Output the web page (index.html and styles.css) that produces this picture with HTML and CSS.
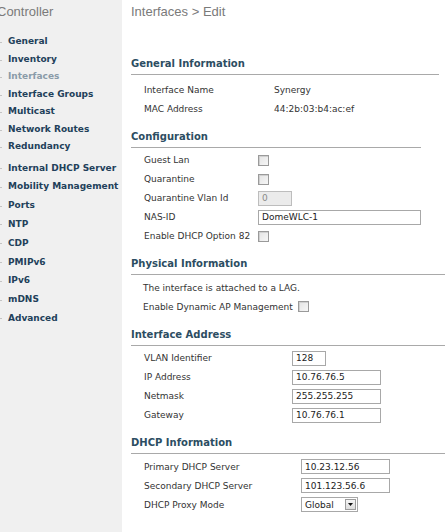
FILE: index.html
```html
<!DOCTYPE html>
<html>
<head>
<meta charset="utf-8">
<title>Interfaces &gt; Edit</title>
<link rel="stylesheet" href="styles.css">
</head>
<body>
<div class="layout">
  <aside class="sidebar">
    <div class="side-title">Controller</div>
    <ul class="nav nav-a">
      <li>General</li>
      <li>Inventory</li>
      <li class="active">Interfaces</li>
      <li>Interface Groups</li>
      <li>Multicast</li>
      <li>Network Routes</li>
      <li>Redundancy</li>
    </ul>
    <ul class="nav nav-b">
      <li>Internal DHCP Server</li>
      <li>Mobility Management</li>
      <li>Ports</li>
      <li>NTP</li>
      <li>CDP</li>
      <li>PMIPv6</li>
      <li>IPv6</li>
      <li>mDNS</li>
      <li>Advanced</li>
    </ul>
  </aside>
  <main class="main">
    <div class="page-title">Interfaces &gt; Edit</div>

    <section class="section first">
      <h2 class="sec-head w-general">General Information</h2>
      <div class="rows rows-general">
        <div class="lab">Interface Name</div><div class="val">Synergy</div>
        <div class="lab">MAC Address</div><div class="val">44:2b:03:b4:ac:ef</div>
      </div>
    </section>

    <section class="section">
      <h2 class="sec-head w-config">Configuration</h2>
      <div class="rows rows-config">
        <div class="lab">Guest Lan</div><div class="val"><input type="checkbox" class="chk"></div>
        <div class="lab">Quarantine</div><div class="val"><input type="checkbox" class="chk"></div>
        <div class="lab">Quarantine Vlan Id</div><div class="val"><input type="text" class="txt txt-xs disabled" value="0" disabled></div>
        <div class="lab">NAS-ID</div><div class="val"><input type="text" class="txt txt-wide" value="DomeWLC-1"></div>
        <div class="lab">Enable DHCP Option 82</div><div class="val"><input type="checkbox" class="chk"></div>
      </div>
    </section>

    <section class="section">
      <h2 class="sec-head">Physical Information</h2>
      <div class="rows-plain">
        <div class="line">The interface is attached to a LAG.</div>
        <div class="line">Enable Dynamic AP Management <input type="checkbox" class="chk chk-inline"></div>
      </div>
    </section>

    <section class="section">
      <h2 class="sec-head">Interface Address</h2>
      <div class="rows rows-addr">
        <div class="lab">VLAN Identifier</div><div class="val"><input type="text" class="txt txt-xs" value="128"></div>
        <div class="lab">IP Address</div><div class="val"><input type="text" class="txt txt-md" value="10.76.76.5"></div>
        <div class="lab">Netmask</div><div class="val"><input type="text" class="txt txt-md" value="255.255.255"></div>
        <div class="lab">Gateway</div><div class="val"><input type="text" class="txt txt-md" value="10.76.76.1"></div>
      </div>
    </section>

    <section class="section">
      <h2 class="sec-head">DHCP Information</h2>
      <div class="rows rows-dhcp">
        <div class="lab">Primary DHCP Server</div><div class="val"><input type="text" class="txt txt-md" value="10.23.12.56"></div>
        <div class="lab">Secondary DHCP Server</div><div class="val"><input type="text" class="txt txt-md" value="101.123.56.6"></div>
        <div class="lab">DHCP Proxy Mode</div>
        <div class="val">
          <span class="select"><span class="select-text">Global</span><span class="select-btn"><svg width="5" height="3" viewBox="0 0 5 3"><path d="M0 0H5L2.5 3Z" fill="#111"/></svg></span></span>
        </div>
      </div>
    </section>
  </main>
</div>
</body>
</html>
```
FILE: styles.css
```css
* { box-sizing: border-box; }
html, body { margin: 0; padding: 0; background: #fff; }
body {
  font-family: "DejaVu Sans", Verdana, sans-serif;
  font-size: 9px;
  color: #333;
  width: 445px;
  height: 532px;
  overflow: hidden;
}
.layout { display: flex; height: 532px; }

/* Sidebar */
.sidebar {
  width: 122px;
  flex: 0 0 122px;
  background: #f0f0f0;
  height: 532px;
  overflow: hidden;
}
.side-title {
  font-family: "Liberation Sans", Arial, sans-serif;
  font-size: 13px;
  line-height: 16px;
  padding-top: 4px;
  margin-left: -3px;
  color: #7a7a7a;
  white-space: nowrap;
}
.nav {
  list-style: none;
  margin: 0;
  padding: 0;
}
.nav li {
  position: relative;
  padding-left: 8px;
  font-weight: bold;
  font-size: 9px;
  color: #22405a;
  white-space: nowrap;
}
.nav li::before {
  content: "";
  position: absolute;
  left: 0;
  top: 50%;
  width: 2px;
  height: 1px;
  background: #c4c4c4;
}
.nav li.active { color: #8a9ba8; }
.nav-a { margin-top: 13.25px; }
.nav-a li { line-height: 17.5px; }
.nav-b { margin-top: 2.8px; }
.nav-b li { line-height: 18.8px; }

/* Main */
.main {
  flex: 1;
  padding-left: 9px;
}
.page-title {
  font-family: "Liberation Sans", Arial, sans-serif;
  font-size: 13px;
  line-height: 16px;
  padding-top: 4px;
  color: #7a7a7a;
}
.section { margin-top: 11.5px; }
.section.first { margin-top: 37px; }
.sec-head {
  margin: 0;
  font-size: 10px;
  font-weight: bold;
  line-height: 14px;
  padding-bottom: 3px;
  color: #2c4d62;
  border-bottom: 1px solid #a9a9a9;
}
.w-general { width: 308px; }
.w-config { width: 290px; }

.rows {
  display: grid;
  padding-top: 3px;
  padding-left: 13px;
  grid-auto-rows: 19px;
  align-items: center;
}
.rows-general { grid-template-columns: 130px auto; padding-top: 5px; }
.rows-config { grid-template-columns: 114px auto; }
.rows-addr { grid-template-columns: 148px auto; }
.rows-dhcp { grid-template-columns: 157px auto; }
.lab, .val { white-space: nowrap; }
.val { display: flex; align-items: center; }

.rows-plain { padding-top: 3px; padding-left: 12px; }
.rows-plain .line {
  height: 19px;
  display: flex;
  align-items: center;
  white-space: nowrap;
}

/* Controls */
.chk {
  -webkit-appearance: none;
  appearance: none;
  margin: 0;
  width: 11px;
  height: 11px;
  border: 1px solid #9a9a9a;
  background: linear-gradient(135deg, #e4e4e4 0%, #f6f6f6 100%);
  box-shadow: inset 1px 1px 0 #d0d0d0;
}
.chk-inline { margin-left: 5px; }

.txt {
  margin: 0;
  height: 15px;
  padding: 0 0 0 3px;
  border: 1px solid #a8a8a8;
  background: #fff;
  font-family: "DejaVu Sans", Verdana, sans-serif;
  font-size: 9px;
  color: #222;
  outline: none;
}
.txt-xs { width: 34px; }
.txt-md { width: 89px; }
.txt-wide { width: 163px; }
.txt.disabled {
  background: #ebebeb;
  border-color: #bdbdbd;
  color: #8a8a8a;
  height: 15px;
}

.select {
  display: inline-flex;
  align-items: center;
  width: 57px;
  height: 15px;
  border: 1px solid #a8a8a8;
  background: #fff;
  padding-left: 3px;
}
.select-text { flex: 1; color: #222; }
.select-btn {
  width: 11px;
  height: 11px;
  margin-right: 1px;
  border: 1px solid #9c9c9c;
  background: linear-gradient(#f4f4f4, #dcdcdc);
  display: flex;
  align-items: center;
  justify-content: center;
}
.select-btn svg { display: block; }
```
